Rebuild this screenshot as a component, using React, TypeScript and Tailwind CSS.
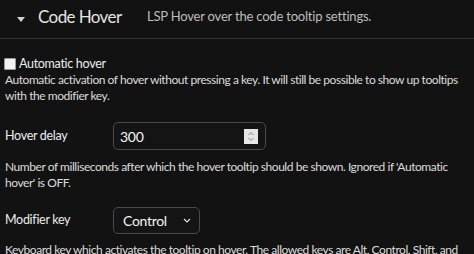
import { FC } from "react";

const font = { fontFamily: 'Lato, "Segoe UI", "Noto Sans", sans-serif' };

const App: FC = () => {
  return (
    <div
      className="w-[474px] h-[254px] overflow-hidden bg-[#121212] text-[#dcdcdc]"
      style={font}
    >
      {/* header */}
      <div className="h-[39px] flex items-center border-b border-[#333333]">
        <div className="w-[38px] flex justify-center pl-[3px]">
          <svg width="8" height="5" viewBox="0 0 8 5">
            <path d="M0 0h8L4 5z" fill="#d0d0d0" />
          </svg>
        </div>
        <span className="w-[109px] text-[17px] tracking-[-0.6px] text-[#e4e4e4] leading-none pb-[5px]">
          Code Hover
        </span>
        <span className="text-[13px] tracking-[-0.2px] text-[#bdbdbd] leading-none pb-[5px]">
          LSP Hover over the code tooltip settings.
        </span>
      </div>

      <div className="px-[5px] text-[12px] tracking-[-0.45px]">
        <label className="flex items-center gap-[3px] mt-[17px] text-[12.5px] tracking-[-0.3px] text-[#ececec] leading-[16px]">
          <span className="w-[12px] h-[12px] bg-[#f2f2f2] border border-[#9a9a9a] rounded-[1px] -ml-[1px]" />
          Automatic hover
        </label>
        <p className="leading-[16px]">
          Automatic activation of hover without pressing a key. It will still be possible to show up tooltips with the
          modifier key.
        </p>

        <div className="flex items-center mt-[18px] text-[12.5px] tracking-[-0.3px]">
          <span className="w-[108px] text-[#ececec]">Hover delay</span>
          <div className="w-[153px] h-[28px] border border-[#4a4a4a] rounded-[5px] bg-[#141414] flex items-center pl-[6px] pr-[7px]">
            <span className="flex-1 text-[14px] text-[#f4f4f4]">300</span>
            <div className="w-[14px] h-[15px] bg-[#e6e6e6] flex items-center justify-center">
              <svg width="8" height="11" viewBox="0 0 8 11">
                <path d="M1.5 4L4 1.5L6.5 4M1.5 7L4 9.5L6.5 7" fill="none" stroke="#777" strokeWidth="0.9" />
              </svg>
            </div>
          </div>
        </div>
        <p className="mt-[9px] leading-[16px]">
          Number of milliseconds after which the hover tooltip should be shown. Ignored if 'Automatic hover' is OFF.
        </p>

        <div className="flex items-center mt-[16px] text-[12.5px] tracking-[-0.3px]">
          <span className="w-[108px] text-[#ececec]">Modifier key</span>
          <div className="w-[87px] h-[27px] border border-[#4a4a4a] rounded-[5px] bg-[#141414] flex items-center pl-[9px] pr-[8px]">
            <span className="flex-1 text-[14px] text-[#f4f4f4]">Control</span>
            <svg width="8" height="5" viewBox="0 0 8 5">
              <path d="M1 1L4 4L7 1" fill="none" stroke="#e0e0e0" strokeWidth="1.2" />
            </svg>
          </div>
        </div>
        <p className="mt-[8px] leading-[16px]">
          Keyboard key which activates the tooltip on hover. The allowed keys are Alt, Control, Shift, and Meta.
        </p>
      </div>
    </div>
  );
};

export default App;
